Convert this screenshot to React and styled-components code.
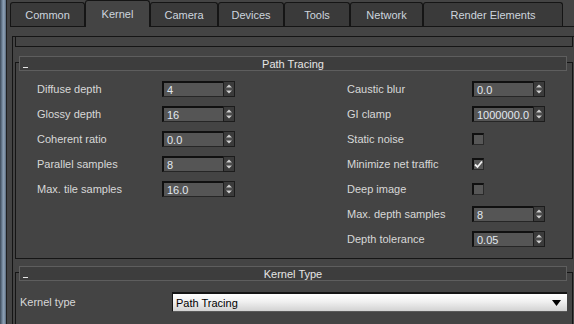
import React from 'react';
import styled, { createGlobalStyle } from 'styled-components';

const GlobalStyle = createGlobalStyle`
    html, body {
        margin: 0;
        padding: 0;
        background: #444444;
        overflow: hidden;
    }
    body {
        font-family: "Liberation Sans", Arial, sans-serif;
        font-size: 11px;
        color: #d8d8d8;
    }
`;

const Window = styled.div`
    display: flex;
    width: 574px;
    height: 324px;
    overflow: hidden;
    background: #444444;
`;

const WindowEdge = styled.div`
    width: 6px;
    flex-shrink: 0;
    background: linear-gradient(to right, #3b4959 0%, #7b8fa4 45%, #90a3b7 65%, #56687b 100%);
    border-right: 1px solid #1f1f1f;
`;

const Main = styled.div`
    flex: 1;
    min-width: 0;
    display: flex;
    flex-direction: column;
`;

const TabBar = styled.div`
    display: flex;
    align-items: flex-end;
    height: 26px;
    margin-left: 3px;
    border-bottom: 1px solid #151515;
`;

const Tab = styled.div`
    box-sizing: border-box;
    flex-shrink: 0;
    width: ${p => p.$w}px;
    height: ${p => (p.$active ? 27 : 24)}px;
    margin-bottom: ${p => (p.$active ? -1 : 0)}px;
    display: flex;
    align-items: center;
    justify-content: center;
    background: ${p => (p.$active ? '#444444' : '#3a3a3a')};
    border: 1px solid #151515;
    border-bottom: none;
    border-radius: 3px 3px 0 0;
    color: #cdd5de;
    font-size: 11px;
`;

const Scroll = styled.div`
    flex: 1;
    margin: 9px 0 0 5px;
    padding: 0 1px 0 2px;
    border-top: 1px solid #151515;
    border-left: 1px solid #151515;
`;

const EmptyBar = styled.div`
    height: 9px;
    border: 1px solid #151515;
    border-top: none;
`;

const Frame = styled.div`
    margin-top: ${p => p.$gap}px;
    border: 1px solid #151515;
`;

const Header = styled.div`
    box-sizing: border-box;
    height: 15px;
    margin: -7px 5px 0 3px;
    display: grid;
    grid-template-columns: 1fr auto 1fr;
    align-items: center;
    background: #3d3d3d;
    border: 1px solid #5e5e5e;
    color: #e6e6e6;
    font-size: 11px;
`;

const Collapse = styled.span`
    align-self: end;
    justify-self: start;
    width: 5px;
    height: 1px;
    margin: 0 0 2px 3px;
    background: #e6e6e6;
`;

const Body = styled.div`
    padding: ${p => p.$pad};
`;

const Columns = styled.div`
    display: flex;
`;

const Column = styled.div`
    display: grid;
    grid-template-columns: 125px ${p => p.$control};
    grid-auto-rows: 25px;
    align-items: center;
`;

const Label = styled.div`
    white-space: nowrap;
    color: #d8d8d8;
`;

const Spinner = styled.div`
    display: flex;
    height: 16px;
`;

const NumberField = styled.div`
    box-sizing: border-box;
    width: 61px;
    height: 16px;
    padding: 1px 0 0 3px;
    background: #555555;
    border-top: 2px solid #101010;
    border-left: 2px solid #101010;
    border-bottom: 1px solid #262626;
    color: #e2e9f1;
    font-size: 11px;
    line-height: 12px;
    white-space: nowrap;
    overflow: hidden;
`;

const SpinButton = styled.div`
    box-sizing: border-box;
    width: 12px;
    height: 16px;
    background: #3b3b3b;
    border: 1px solid #1c1c1c;
    display: flex;
`;

const Check = styled.div`
    box-sizing: border-box;
    width: 12px;
    height: 12px;
    background: #575757;
    border-top: 2px solid #101010;
    border-left: 2px solid #101010;
    border-right: 1px solid #2a2a2a;
    border-bottom: 1px solid #2a2a2a;
    display: flex;
    align-items: center;
    justify-content: center;
`;

const KernelRow = styled.div`
    display: grid;
    grid-template-columns: 152px 1fr;
    align-items: center;
`;

const Dropdown = styled.div`
    box-sizing: border-box;
    height: 20px;
    display: flex;
    align-items: center;
    justify-content: space-between;
    padding: 0 6px 0 3px;
    background: linear-gradient(#ffffff 0%, #f0f0f0 45%, #d2d2d2 100%);
    border-top: 2px solid #141414;
    border-left: 1px solid #141414;
    border-bottom: 1px solid #5a5a5a;
    color: #000000;
    font-size: 11px;
`;

const SpinArrows = () => (
    <svg width="10" height="14" viewBox="0 0 10 14">
        <path d="M5 2.5 L8 5.5 L2 5.5 Z" fill="#cfcfcf" />
        <line x1="1" y1="7" x2="9" y2="7" stroke="#5c5c5c" strokeWidth="1" />
        <path d="M2 8.5 L8 8.5 L5 11.5 Z" fill="#cfcfcf" />
    </svg>
);

const NumberInput = ({ value }) => (
    <Spinner>
        <NumberField>{value}</NumberField>
        <SpinButton>
            <SpinArrows />
        </SpinButton>
    </Spinner>
);

const CheckBox = ({ checked }) => (
    <Check>
        {checked && (
            <svg width="9" height="9" viewBox="0 0 9 9">
                <path d="M1 4.5 L3.5 7 L8 1.5" fill="none" stroke="#f4f4f4" strokeWidth="1.8" />
            </svg>
        )}
    </Check>
);

const Rollout = ({ title, gap, children }) => (
    <Frame $gap={gap}>
        <Header>
            <Collapse />
            <span>{title}</span>
            <span />
        </Header>
        {children}
    </Frame>
);

const tabs = [
    { title: 'Common', w: 75 },
    { title: 'Kernel', w: 65, active: true },
    { title: 'Camera', w: 68 },
    { title: 'Devices', w: 66 },
    { title: 'Tools', w: 66 },
    { title: 'Network', w: 73 },
    { title: 'Render Elements', w: 140 },
];

const leftParams = [
    { label: 'Diffuse depth', value: '4' },
    { label: 'Glossy depth', value: '16' },
    { label: 'Coherent ratio', value: '0.0' },
    { label: 'Parallel samples', value: '8' },
    { label: 'Max. tile samples', value: '16.0' },
];

const rightParams = [
    { label: 'Caustic blur', value: '0.0' },
    { label: 'GI clamp', value: '1000000.0' },
    { label: 'Static noise', check: false },
    { label: 'Minimize net traffic', check: true },
    { label: 'Deep image', check: false },
    { label: 'Max. depth samples', value: '8' },
    { label: 'Depth tolerance', value: '0.05' },
];

const renderParam = p => (
    <React.Fragment key={p.label}>
        <Label>{p.label}</Label>
        {p.value !== undefined ? <NumberInput value={p.value} /> : <CheckBox checked={p.check} />}
    </React.Fragment>
);

export default function App() {
    return (
        <Window>
            <GlobalStyle />
            <WindowEdge />
            <Main>
                <TabBar>
                    {tabs.map(tab => (
                        <Tab key={tab.title} $w={tab.w} $active={tab.active}>
                            {tab.title}
                        </Tab>
                    ))}
                </TabBar>
                <Scroll>
                    <EmptyBar />
                    <Rollout title="Path Tracing" gap={15}>
                        <Body $pad="5px 0 7px 21px">
                            <Columns>
                                <Column $control="185px">{leftParams.map(renderParam)}</Column>
                                <Column $control="auto">{rightParams.map(renderParam)}</Column>
                            </Columns>
                        </Body>
                    </Rollout>
                    <Rollout title="Kernel Type" gap={13}>
                        <Body $pad="11px 5px 20px 4px">
                            <KernelRow>
                                <Label>Kernel type</Label>
                                <Dropdown>
                                    <span>Path Tracing</span>
                                    <svg width="9" height="6" viewBox="0 0 9 6">
                                        <path d="M0 0 L9 0 L4.5 6 Z" fill="#000000" />
                                    </svg>
                                </Dropdown>
                            </KernelRow>
                        </Body>
                    </Rollout>
                </Scroll>
            </Main>
        </Window>
    );
}
